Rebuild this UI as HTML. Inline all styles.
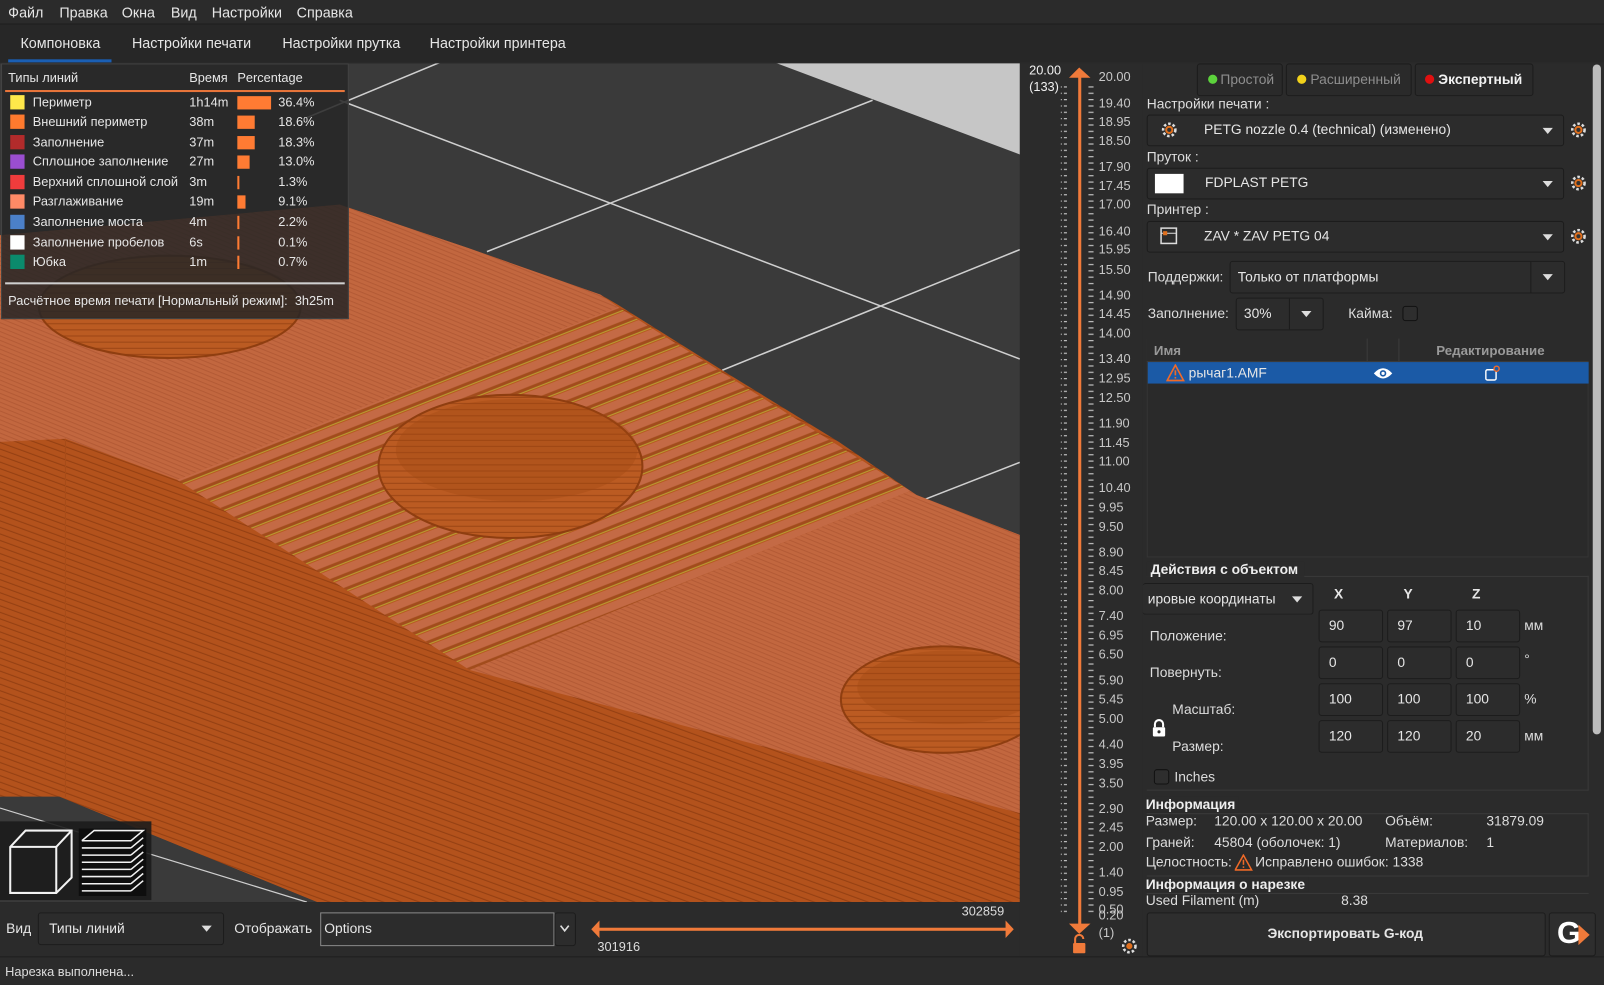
<!DOCTYPE html>
<html><head><meta charset="utf-8">
<style>
*{box-sizing:border-box;margin:0;padding:0}
html,body{width:1604px;height:985px;overflow:hidden;background:#2b2b2b}
#root{position:absolute;left:0;top:0;width:1568px;height:963px;transform:scale(1.02296,1.02284);transform-origin:0 0;font-family:"Liberation Sans","DejaVu Sans",sans-serif;color:#e6e6e6;font-size:13px}
.a{position:absolute;white-space:nowrap}
.menu{left:0;top:0;width:1568px;height:24px;background:#2b2b2b;border-bottom:1px solid #1d1d1d}
.tabs{left:0;top:24px;width:1568px;height:37px;background:#272727}
.cb{position:absolute;background:#2c2c2c;border:1px solid #1c1c1c;border-radius:3px}
.arr{position:absolute;width:0;height:0;border-left:5px solid transparent;border-right:5px solid transparent;border-top:6px solid #ddd}
.fld{position:absolute;width:63px;height:32px;background:#2c2c2c;border:1px solid #1c1c1c;border-radius:3px;padding:7px 0 0 9px;font-size:13.5px}
.lbl{position:absolute;font-size:13.5px;color:#ddd}
</style></head><body><div id="root">

<div class="a menu"></div>
<div class="a" style="left:8px;top:4px;font-size:14px">Файл</div>
<div class="a" style="left:58px;top:4px;font-size:14px">Правка</div>
<div class="a" style="left:119px;top:4px;font-size:14px">Окна</div>
<div class="a" style="left:167px;top:4px;font-size:14px">Вид</div>
<div class="a" style="left:207px;top:4px;font-size:14px">Настройки</div>
<div class="a" style="left:290px;top:4px;font-size:14px">Справка</div>
<div class="a tabs"></div>
<div class="a" style="left:20px;top:34px;font-size:14px">Компоновка</div>
<div class="a" style="left:8px;top:58px;width:101px;height:3px;background:#1a5fb4"></div>
<div class="a" style="left:129px;top:34px;font-size:14px">Настройки печати</div>
<div class="a" style="left:276px;top:34px;font-size:14px">Настройки прутка</div>
<div class="a" style="left:420px;top:34px;font-size:14px">Настройки принтера</div>

<svg class="a" style="left:0;top:0" width="1568" height="963" viewBox="0 0 1568 963">
<defs>
<clipPath id="vp"><rect x="0" y="62" width="997" height="820"/></clipPath>
<pattern id="topf" width="4" height="4" patternUnits="userSpaceOnUse" patternTransform="rotate(22)">
<rect width="4" height="4" fill="#c2673f"/><rect width="4" height="1" fill="#b35a35"/></pattern>
<pattern id="ribs" width="13" height="13" patternUnits="userSpaceOnUse" patternTransform="rotate(-21.5)">
<rect width="13" height="13" fill="#c46a45"/><rect y="8" width="13" height="3" fill="#a24c1c"/><rect y="11" width="13" height="1" fill="#b8a030"/><rect y="12" width="13" height="1" fill="#b85a22"/></pattern>
<pattern id="wall" width="6" height="6" patternUnits="userSpaceOnUse" patternTransform="rotate(20)">
<rect width="6" height="6" fill="#b3521c"/><rect y="4" width="6" height="1" fill="#933f12"/></pattern>
<pattern id="hole" width="6" height="6" patternUnits="userSpaceOnUse">
<rect width="6" height="6" fill="#bb5b22"/><rect y="4" width="6" height="1" fill="#9c4615"/></pattern>
</defs>
<g clip-path="url(#vp)">
<rect x="0" y="62" width="997" height="820" fill="#3a3a3a"/>
<polygon points="757,61 997,61 997,151" fill="#c6c6c6"/>
<g stroke="#cfcfcf" stroke-width="1.5">
<line x1="332" y1="98" x2="997" y2="351"/>
<line x1="430" y1="61" x2="300" y2="115"/>
<line x1="853" y1="98" x2="476" y2="246"/>
<line x1="997" y1="244" x2="706" y2="362"/>
<line x1="997" y1="452" x2="902" y2="489"/>
</g>
<polygon points="0,230 332,200 459,243 587,288 604,298 706,362 820,432 896,484 997,523 997,882 310,882 58,779 0,779" fill="url(#wall)"/>
<polygon points="0,230 332,200 459,243 587,288 604,300 173,469 64,429 0,432" fill="url(#topf)"/>
<polygon points="173,469 604,300 890,480 459,655" fill="url(#ribs)"/>
<polygon points="459,655 890,480 896,484 997,523 997,795" fill="url(#topf)"/>
<line x1="64" y1="429" x2="64" y2="779" stroke="#a84c18" stroke-width="1"/>
<ellipse cx="166" cy="300" rx="128" ry="50" fill="url(#hole)" stroke="#8f3e10" stroke-width="2"/>
<ellipse cx="499" cy="456" rx="129" ry="70" fill="url(#hole)" stroke="#8f3e10" stroke-width="2"/>
<ellipse cx="505" cy="440" rx="118" ry="50" fill="#a04812" opacity="0.35"/>
<ellipse cx="922" cy="684" rx="100" ry="52" fill="url(#hole)" stroke="#8f3e10" stroke-width="2"/>
<ellipse cx="928" cy="672" rx="90" ry="36" fill="#a04812" opacity="0.35"/>
<polygon points="0,779 58,779 310,882 0,882" fill="#3a3a3a"/>
<line x1="0" y1="790" x2="300" y2="882" stroke="#cfcfcf" stroke-width="1.2"/>
</g>
<rect x="0" y="803" width="148" height="77" fill="#1c1c1c" opacity="0.9"/>
<g fill="none" stroke="#f2f2f2" stroke-width="2">
<polygon points="10,828 25,812 70,812 70,858 55,873 10,873"/>
<polyline points="10,828 55,828 70,812"/><line x1="55" y1="828" x2="55" y2="873"/>
</g>
<rect x="77" y="810" width="66" height="66" fill="#0e0e0e"/>
<g stroke="#f2f2f2" stroke-width="1.5" fill="none">
<polyline points="80,822 128,822 140,812 92,812 80,822"/>
<line x1="80" y1="829" x2="128" y2="829"/><line x1="128" y1="829" x2="140" y2="819"/>
<line x1="80" y1="836" x2="128" y2="836"/><line x1="128" y1="836" x2="140" y2="826"/>
<line x1="80" y1="843" x2="128" y2="843"/><line x1="128" y1="843" x2="140" y2="833"/>
<line x1="80" y1="850" x2="128" y2="850"/><line x1="128" y1="850" x2="140" y2="840"/>
<line x1="80" y1="857" x2="128" y2="857"/><line x1="128" y1="857" x2="140" y2="847"/>
<line x1="80" y1="864" x2="128" y2="864"/><line x1="128" y1="864" x2="140" y2="854"/>
<line x1="80" y1="871" x2="128" y2="871"/><line x1="128" y1="871" x2="140" y2="861"/>
</g>
</svg>

<div class="a" style="left:1px;top:62px;width:340px;height:250px;background:rgba(38,38,38,0.86);border:1px solid #444"></div>
<div class="a" style="left:8px;top:69px;font-size:12.5px">Типы линий</div>
<div class="a" style="left:185px;top:69px;font-size:12.5px">Время</div>
<div class="a" style="left:232px;top:69px;font-size:12.5px">Percentage</div>
<div class="a" style="left:5px;top:88px;width:332px;height:1.5px;background:#e8753a"></div>
<div class="a" style="left:0;top:92px;font-size:12.5px"><div class="a" style="left:10px;top:1px;width:14px;height:14px;background:#ffe84a"></div><div class="a" style="left:32px;top:1px">Периметр</div><div class="a" style="left:185px;top:1px">1h14m</div><div class="a" style="left:232px;top:2px;width:33px;height:13px;background:#ff7b33"></div><div class="a" style="left:272px;top:1px">36.4%</div></div>
<div class="a" style="left:0;top:111px;font-size:12.5px"><div class="a" style="left:10px;top:1px;width:14px;height:14px;background:#ff7a2e"></div><div class="a" style="left:32px;top:1px">Внешний периметр</div><div class="a" style="left:185px;top:1px">38m</div><div class="a" style="left:232px;top:2px;width:17px;height:13px;background:#ff7b33"></div><div class="a" style="left:272px;top:1px">18.6%</div></div>
<div class="a" style="left:0;top:131px;font-size:12.5px"><div class="a" style="left:10px;top:1px;width:14px;height:14px;background:#b22b2b"></div><div class="a" style="left:32px;top:1px">Заполнение</div><div class="a" style="left:185px;top:1px">37m</div><div class="a" style="left:232px;top:2px;width:17px;height:13px;background:#ff7b33"></div><div class="a" style="left:272px;top:1px">18.3%</div></div>
<div class="a" style="left:0;top:150px;font-size:12.5px"><div class="a" style="left:10px;top:1px;width:14px;height:14px;background:#9a4ed0"></div><div class="a" style="left:32px;top:1px">Сплошное заполнение</div><div class="a" style="left:185px;top:1px">27m</div><div class="a" style="left:232px;top:2px;width:12px;height:13px;background:#ff7b33"></div><div class="a" style="left:272px;top:1px">13.0%</div></div>
<div class="a" style="left:0;top:170px;font-size:12.5px"><div class="a" style="left:10px;top:1px;width:14px;height:14px;background:#f03c3c"></div><div class="a" style="left:32px;top:1px">Верхний сплошной слой</div><div class="a" style="left:185px;top:1px">3m</div><div class="a" style="left:232px;top:2px;width:2px;height:13px;background:#ff7b33"></div><div class="a" style="left:272px;top:1px">1.3%</div></div>
<div class="a" style="left:0;top:189px;font-size:12.5px"><div class="a" style="left:10px;top:1px;width:14px;height:14px;background:#ff8a66"></div><div class="a" style="left:32px;top:1px">Разглаживание</div><div class="a" style="left:185px;top:1px">19m</div><div class="a" style="left:232px;top:2px;width:8px;height:13px;background:#ff7b33"></div><div class="a" style="left:272px;top:1px">9.1%</div></div>
<div class="a" style="left:0;top:209px;font-size:12.5px"><div class="a" style="left:10px;top:1px;width:14px;height:14px;background:#4b80c8"></div><div class="a" style="left:32px;top:1px">Заполнение моста</div><div class="a" style="left:185px;top:1px">4m</div><div class="a" style="left:232px;top:2px;width:2px;height:13px;background:#ff7b33"></div><div class="a" style="left:272px;top:1px">2.2%</div></div>
<div class="a" style="left:0;top:229px;font-size:12.5px"><div class="a" style="left:10px;top:1px;width:14px;height:14px;background:#ffffff"></div><div class="a" style="left:32px;top:1px">Заполнение пробелов</div><div class="a" style="left:185px;top:1px">6s</div><div class="a" style="left:232px;top:2px;width:2px;height:13px;background:#ff7b33"></div><div class="a" style="left:272px;top:1px">0.1%</div></div>
<div class="a" style="left:0;top:248px;font-size:12.5px"><div class="a" style="left:10px;top:1px;width:14px;height:14px;background:#0b8a6c"></div><div class="a" style="left:32px;top:1px">Юбка</div><div class="a" style="left:185px;top:1px">1m</div><div class="a" style="left:232px;top:2px;width:2px;height:13px;background:#ff7b33"></div><div class="a" style="left:272px;top:1px">0.7%</div></div>
<div class="a" style="left:5px;top:276px;width:332px;height:1.5px;background:#cfcfcf"></div>
<div class="a" style="left:8px;top:287px;font-size:12.5px">Расчётное время печати [Нормальный режим]:&nbsp; 3h25m</div>

<div class="a" style="left:997px;top:62px;width:120px;height:873px;background:#2b2b2b"></div>
<svg class="a" style="left:997px;top:62px" width="120" height="873" viewBox="997 62 120 873">
<defs><pattern id="tk" width="8" height="6.2" patternUnits="userSpaceOnUse" y="72"><rect width="6" height="1.2" fill="#bdbdbd"/></pattern></defs>
<rect x="1037" y="80" width="6" height="815" fill="url(#tk)"/>
<rect x="1063" y="80" width="6" height="815" fill="url(#tk)"/>
<rect x="1054" y="74" width="3" height="832" fill="#f07a3a"/>
<polygon points="1045,76 1055,66 1066,76" fill="#f07a3a"/>
<polygon points="1045,903 1066,903 1055,913" fill="#f07a3a"/>
<g font-family="Liberation Sans,sans-serif" font-size="12.5" fill="#c8c8c8">
<text x="1074" y="79">20.00</text><text x="1074" y="105">19.40</text><text x="1074" y="123">18.95</text><text x="1074" y="142">18.50</text>
<text x="1074" y="167">17.90</text><text x="1074" y="186">17.45</text><text x="1074" y="204">17.00</text><text x="1074" y="230">16.40</text>
<text x="1074" y="248">15.95</text><text x="1074" y="268">15.50</text><text x="1074" y="293">14.90</text><text x="1074" y="311">14.45</text>
<text x="1074" y="330">14.00</text><text x="1074" y="355">13.40</text><text x="1074" y="374">12.95</text><text x="1074" y="393">12.50</text>
<text x="1074" y="418">11.90</text><text x="1074" y="437">11.45</text><text x="1074" y="455">11.00</text><text x="1074" y="481">10.40</text>
<text x="1074" y="500">9.95</text><text x="1074" y="519">9.50</text><text x="1074" y="544">8.90</text><text x="1074" y="562">8.45</text>
<text x="1074" y="581">8.00</text><text x="1074" y="606">7.40</text><text x="1074" y="625">6.95</text><text x="1074" y="644">6.50</text>
<text x="1074" y="669">5.90</text><text x="1074" y="688">5.45</text><text x="1074" y="707">5.00</text><text x="1074" y="732">4.40</text>
<text x="1074" y="751">3.95</text><text x="1074" y="770">3.50</text><text x="1074" y="795">2.90</text><text x="1074" y="813">2.45</text>
<text x="1074" y="832">2.00</text><text x="1074" y="857">1.40</text><text x="1074" y="876">0.95</text><text x="1074" y="893">0.50</text>
<text x="1074" y="899">0.20</text><text x="1074" y="916">(1)</text>
</g>
<g font-family="Liberation Sans,sans-serif" font-size="12.5" fill="#f0f0f0"><text x="1006" y="73">20.00</text><text x="1006" y="89">(133)</text></g>
<rect x="1049" y="922" width="12" height="10" rx="1" fill="#f07a3a"/>
<path d="M1051 922 v-4 a4 4 0 0 1 8 0" fill="none" stroke="#f07a3a" stroke-width="2"/>
<circle cx="1104" cy="925" r="6" fill="none" stroke="#ddd" stroke-width="2.5" stroke-dasharray="2.5 2"/>
<circle cx="1104" cy="925" r="3" fill="#e0701e"/>
</svg>

<div class="a" style="left:0;top:882px;width:997px;height:53px;background:#2b2b2b"></div>
<div class="a" style="left:6px;top:900px;font-size:13.5px">Вид</div>
<div class="cb" style="left:37px;top:892px;width:182px;height:32px"></div>
<div class="a" style="left:48px;top:900px;font-size:13.5px">Типы линий</div>
<div class="arr" style="left:197px;top:905px"></div>
<div class="a" style="left:229px;top:900px;font-size:13.5px">Отображать</div>
<div class="a" style="left:313px;top:892px;width:229px;height:33px;background:#2c2c2c;border:1px solid #888"></div>
<div class="a" style="left:317px;top:900px;font-size:13.5px">Options</div>
<div class="cb" style="left:542px;top:892px;width:21px;height:33px"></div>
<svg class="a" style="left:546px;top:903px" width="12" height="10"><polyline points="2,2 6,7 10,2" fill="none" stroke="#ddd" stroke-width="1.6"/></svg>
<svg class="a" style="left:570px;top:895px" width="430" height="30">
<rect x="12" y="12" width="405" height="3" fill="#f07a3a"/>
<polygon points="8,13.5 16,5 16,22" fill="#f07a3a"/>
<polygon points="421,13.5 413,5 413,22" fill="#f07a3a"/>
</svg>
<div class="a" style="left:940px;top:884px;font-size:12.5px;color:#ddd">302859</div>
<div class="a" style="left:584px;top:919px;font-size:12.5px;color:#ddd">301916</div>

<div class="a" style="left:0;top:935px;width:1568px;height:28px;background:#2b2b2b;border-top:1px solid #1e1e1e"></div>
<div class="a" style="left:5px;top:943px;font-size:12.5px;color:#ddd">Нарезка выполнена...</div>

<div class="a" style="left:1117px;top:62px;width:451px;height:873px;background:#2b2b2b"></div>
<div class="a" style="left:1557px;top:63px;width:8px;height:655px;background:#bdbdbd;border-radius:4px"></div>
<div class="cb" style="left:1170px;top:62px;width:84px;height:32px;background:#2a2a2a"></div>
<div class="a" style="left:1181px;top:73px;width:9px;height:9px;border-radius:50%;background:#5cd23c"></div>
<div class="a" style="left:1193px;top:70px;font-size:13.5px;color:#8e8e8e">Простой</div>
<div class="cb" style="left:1257px;top:62px;width:123px;height:32px;background:#2a2a2a"></div>
<div class="a" style="left:1268px;top:73px;width:9px;height:9px;border-radius:50%;background:#f2d21b"></div>
<div class="a" style="left:1281px;top:70px;font-size:13.5px;color:#8e8e8e">Расширенный</div>
<div class="cb" style="left:1383px;top:62px;width:116px;height:32px;background:#2a2a2a"></div>
<div class="a" style="left:1393px;top:73px;width:9px;height:9px;border-radius:50%;background:#e01010"></div>
<div class="a" style="left:1406px;top:70px;font-size:13.5px;font-weight:bold;color:#f2f2f2">Экспертный</div>

<div class="lbl" style="left:1121px;top:94px">Настройки печати :</div>
<div class="cb" style="left:1121px;top:112px;width:408px;height:31px"></div>
<svg class="a" style="left:1134px;top:118px" width="20" height="20"><circle cx="9" cy="9" r="6" fill="none" stroke="#ddd" stroke-width="2.5" stroke-dasharray="2.5 2"/><circle cx="9" cy="9" r="4" fill="#e0701e"/><circle cx="9" cy="9" r="2" fill="#333"/></svg>
<div class="a" style="left:1177px;top:119px;font-size:13.5px">PETG nozzle 0.4 (technical) (изменено)</div>
<div class="arr" style="left:1508px;top:125px"></div>
<svg class="a" style="left:1534px;top:118px" width="20" height="20"><circle cx="9" cy="9" r="6" fill="none" stroke="#ddd" stroke-width="2.5" stroke-dasharray="2.5 2"/><circle cx="9" cy="9" r="4" fill="#e0701e"/><circle cx="9" cy="9" r="2" fill="#333"/></svg>

<div class="lbl" style="left:1121px;top:146px">Пруток :</div>
<div class="cb" style="left:1121px;top:164px;width:408px;height:31px"></div>
<div class="a" style="left:1129px;top:170px;width:28px;height:19px;background:#fff"></div>
<div class="a" style="left:1178px;top:171px;font-size:13.5px">FDPLAST PETG</div>
<div class="arr" style="left:1508px;top:177px"></div>
<svg class="a" style="left:1534px;top:170px" width="20" height="20"><circle cx="9" cy="9" r="6" fill="none" stroke="#ddd" stroke-width="2.5" stroke-dasharray="2.5 2"/><circle cx="9" cy="9" r="4" fill="#e0701e"/><circle cx="9" cy="9" r="2" fill="#333"/></svg>

<div class="lbl" style="left:1121px;top:197px">Принтер :</div>
<div class="cb" style="left:1121px;top:216px;width:408px;height:31px"></div>
<svg class="a" style="left:1134px;top:222px" width="18" height="18"><rect x="1" y="1" width="15" height="15" fill="none" stroke="#ddd" stroke-width="1.5"/><line x1="1" y1="6" x2="16" y2="6" stroke="#ddd"/><rect x="3" y="4" width="4" height="4" fill="#e0701e"/></svg>
<div class="a" style="left:1177px;top:223px;font-size:13.5px">ZAV * ZAV PETG 04</div>
<div class="arr" style="left:1508px;top:229px"></div>
<svg class="a" style="left:1534px;top:222px" width="20" height="20"><circle cx="9" cy="9" r="6" fill="none" stroke="#ddd" stroke-width="2.5" stroke-dasharray="2.5 2"/><circle cx="9" cy="9" r="4" fill="#e0701e"/><circle cx="9" cy="9" r="2" fill="#333"/></svg>

<div class="lbl" style="left:1122px;top:263px">Поддержки:</div>
<div class="cb" style="left:1202px;top:255px;width:328px;height:32px"></div>
<div class="a" style="left:1496px;top:256px;width:1px;height:30px;background:#1c1c1c"></div>
<div class="a" style="left:1210px;top:263px;font-size:13.5px">Только от платформы</div>
<div class="arr" style="left:1508px;top:268px"></div>

<div class="lbl" style="left:1122px;top:299px">Заполнение:</div>
<div class="cb" style="left:1208px;top:291px;width:86px;height:32px"></div>
<div class="a" style="left:1260px;top:292px;width:1px;height:30px;background:#1c1c1c"></div>
<div class="a" style="left:1216px;top:299px;font-size:13.5px">30%</div>
<div class="arr" style="left:1272px;top:304px"></div>
<div class="lbl" style="left:1318px;top:299px">Кайма:</div>
<div class="a" style="left:1371px;top:299px;width:15px;height:15px;border:1px solid #111;border-radius:3px;background:#2e2e2e"></div>

<div class="a" style="left:1121px;top:331px;width:432px;height:214px;background:#2a2a2a;border:1px solid #353535"></div>
<div class="a" style="left:1121px;top:331px;width:432px;height:23px;border-bottom:1px solid #3c3c3c;background:#2b2b2b"></div>
<div class="a" style="left:1336px;top:331px;width:1px;height:22px;background:#3c3c3c"></div>
<div class="a" style="left:1367px;top:331px;width:1px;height:22px;background:#3c3c3c"></div>
<div class="a" style="left:1128px;top:335px;font-size:13px;font-weight:bold;color:#999">Имя</div>
<div class="a" style="left:1404px;top:335px;font-size:13px;font-weight:bold;color:#999">Редактирование</div>
<div class="a" style="left:1122px;top:354px;width:431px;height:21px;background:#1b5aa6"></div>
<svg class="a" style="left:1140px;top:356px" width="20" height="18"><path d="M9 1 L17 16 H1 Z" fill="none" stroke="#f06a28" stroke-width="1.6"/><rect x="8.2" y="6" width="1.6" height="5" fill="#f06a28"/><rect x="8.2" y="12.5" width="1.6" height="1.6" fill="#f06a28"/></svg>
<div class="a" style="left:1162px;top:357px;font-size:13.5px">рычаг1.AMF</div>
<svg class="a" style="left:1342px;top:358px" width="20" height="14"><path d="M1 7 Q10 -3 19 7 Q10 17 1 7 Z" fill="#fff"/><circle cx="10" cy="7" r="3.2" fill="#1b5aa6"/><circle cx="10" cy="7" r="1.6" fill="#fff"/></svg>
<svg class="a" style="left:1451px;top:357px" width="16" height="17"><rect x="1.5" y="4.5" width="10" height="10" rx="1.5" fill="none" stroke="#fff" stroke-width="1.4"/><circle cx="12" cy="3.5" r="2.5" fill="#1b5aa6" stroke="#f06a28" stroke-width="1.4"/></svg>

<div class="a" style="left:1121px;top:563px;width:432px;height:210px;border:1px solid #3a3a3a;border-left:none"></div>
<div class="a" style="left:1121px;top:549px;background:#2b2b2b;padding-right:6px;font-size:13.5px;font-weight:bold;color:#eee">&nbsp;Действия с объектом</div>
<div class="cb" style="left:1117px;top:570px;width:167px;height:31px;border-left:none"></div>
<div class="a" style="left:1122px;top:578px;font-size:13.5px">ировые координаты</div>
<div class="arr" style="left:1263px;top:583px"></div>
<div class="a" style="left:1304px;top:573px;font-size:13.5px;font-weight:bold">X</div>
<div class="a" style="left:1372px;top:573px;font-size:13.5px;font-weight:bold">Y</div>
<div class="a" style="left:1439px;top:573px;font-size:13.5px;font-weight:bold">Z</div>
<div class="fld" style="left:1289px;top:596px">90</div><div class="fld" style="left:1356px;top:596px">97</div><div class="fld" style="left:1423px;top:596px">10</div><div class="lbl" style="left:1490px;top:604px">мм</div>
<div class="fld" style="left:1289px;top:632px">0</div><div class="fld" style="left:1356px;top:632px">0</div><div class="fld" style="left:1423px;top:632px">0</div><div class="lbl" style="left:1490px;top:637px">°</div>
<div class="fld" style="left:1289px;top:668px">100</div><div class="fld" style="left:1356px;top:668px">100</div><div class="fld" style="left:1423px;top:668px">100</div><div class="lbl" style="left:1490px;top:676px">%</div>
<div class="fld" style="left:1289px;top:704px">120</div><div class="fld" style="left:1356px;top:704px">120</div><div class="fld" style="left:1423px;top:704px">20</div><div class="lbl" style="left:1490px;top:712px">мм</div>
<div class="lbl" style="left:1124px;top:614px">Положение:</div>
<div class="lbl" style="left:1124px;top:650px">Повернуть:</div>
<div class="lbl" style="left:1146px;top:686px">Масштаб:</div>
<div class="lbl" style="left:1146px;top:722px">Размер:</div>
<svg class="a" style="left:1126px;top:703px" width="14" height="18"><path d="M3 8 V5 a4 4 0 0 1 8 0 V8" fill="none" stroke="#fff" stroke-width="2"/><rect x="1" y="8" width="12" height="9" rx="1" fill="#fff"/><circle cx="7" cy="12.5" r="1.5" fill="#2b2b2b"/></svg>
<div class="a" style="left:1128px;top:752px;width:15px;height:15px;border:1px solid #111;border-radius:3px;background:#2e2e2e"></div>
<div class="lbl" style="left:1148px;top:752px">Inches</div>

<div class="a" style="left:1121px;top:795px;width:432px;height:62px;border:1px solid #3a3a3a;border-left:none"></div>
<div class="a" style="left:1120px;top:779px;background:#2b2b2b;padding-right:3px;font-size:13.5px;font-weight:bold;color:#eee">Информация</div>
<div class="lbl" style="left:1120px;top:795px">Размер:</div><div class="lbl" style="left:1187px;top:795px">120.00 x 120.00 x 20.00</div>
<div class="lbl" style="left:1354px;top:795px">Объём:</div><div class="lbl" style="left:1453px;top:795px">31879.09</div>
<div class="lbl" style="left:1120px;top:816px">Граней:</div><div class="lbl" style="left:1187px;top:816px">45804 (оболочек: 1)</div>
<div class="lbl" style="left:1354px;top:816px">Материалов:</div><div class="lbl" style="left:1453px;top:816px">1</div>
<div class="lbl" style="left:1120px;top:835px">Целостность:</div>
<svg class="a" style="left:1207px;top:835px" width="18" height="17"><path d="M8.5 1 L16.5 15.5 H0.5 Z" fill="none" stroke="#f06a28" stroke-width="1.5"/><rect x="7.8" y="5.5" width="1.5" height="5" fill="#f06a28"/><rect x="7.8" y="12" width="1.5" height="1.5" fill="#f06a28"/></svg>
<div class="lbl" style="left:1227px;top:835px">Исправлено ошибок: 1338</div>
<div class="a" style="left:1121px;top:873px;width:432px;height:20px;border-top:1px solid #3a3a3a"></div>
<div class="a" style="left:1120px;top:857px;background:#2b2b2b;padding-right:3px;font-size:13.5px;font-weight:bold;color:#eee">Информация о нарезке</div>
<div class="lbl" style="left:1120px;top:873px">Used Filament (m)</div><div class="lbl" style="left:1311px;top:873px">8.38</div>

<div class="cb" style="left:1121px;top:892px;width:390px;height:43px;background:#2e2e2e"></div>
<div class="a" style="left:1239px;top:905px;font-size:13.5px;font-weight:bold">Экспортировать G-код</div>
<div class="cb" style="left:1514px;top:892px;width:46px;height:43px;background:#2e2e2e"></div>
<div class="a" style="left:1522px;top:896px;font-size:30px;font-weight:bold;color:#fff;letter-spacing:-1px">G</div>
<svg class="a" style="left:1542px;top:903px" width="14" height="22"><polygon points="1,1 12,11 1,21" fill="#f07a3a"/></svg>
</div></body></html>
